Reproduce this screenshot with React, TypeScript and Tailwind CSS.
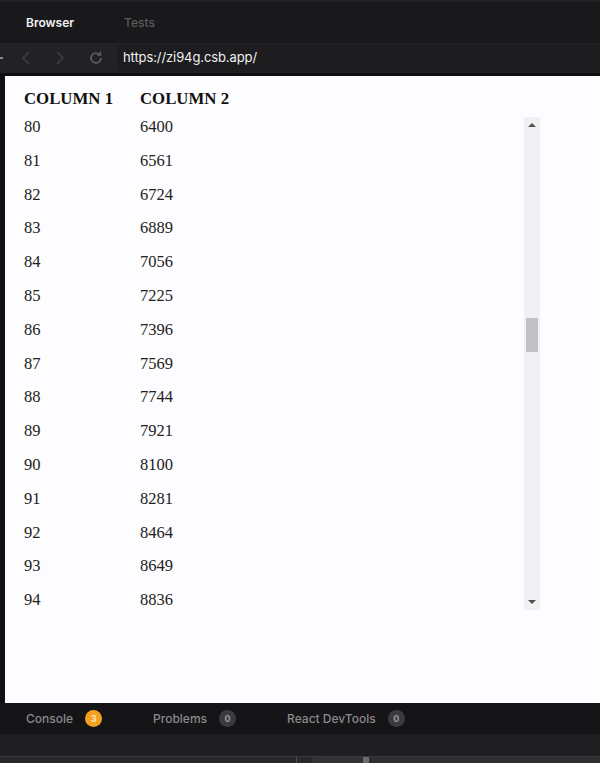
import React from "react";

const rows = Array.from({ length: 15 }, (_, i) => 80 + i);

function Badge({ n, orange }: { n: number; orange?: boolean }) {
  return (
    <span
      className={
        orange
          ? "ml-[12px] flex h-[17px] w-[17px] items-center justify-center rounded-full bg-[#f5a01f] text-[9px] font-bold text-[#fde7c4]"
          : "ml-[12px] flex h-[17px] w-[17px] items-center justify-center rounded-full bg-[#3b3a3e] text-[9px] font-bold text-[#9a999c]"
      }
    >
      {n}
    </span>
  );
}

export default function App() {
  return (
    <div className="flex h-[763px] w-[600px] flex-col overflow-hidden bg-[#151417] font-['Inter','Roboto',sans-serif]">
      {/* tab bar */}
      <div className="flex h-[43px] shrink-0 items-center border-t-[2px] border-[#232225] bg-[#19181b] text-[12px]">
        <span className="ml-[26px] font-semibold text-[#f2f2f3]">Browser</span>
        <span className="ml-[50px] font-medium text-[#5b5a5e]">Tests</span>
      </div>
      {/* address row */}
      <div className="flex h-[30px] shrink-0 items-center bg-[#222124]">
        <span className="h-[2px] w-[3px] bg-[#8a898c]" />
        <svg className="ml-[18px]" width="10" height="14" viewBox="0 0 10 14" fill="none">
          <path d="M8 1L2 7l6 6" stroke="#3f3e42" strokeWidth="1.5" />
        </svg>
        <svg className="ml-[24px]" width="10" height="14" viewBox="0 0 10 14" fill="none">
          <path d="M2 1l6 6-6 6" stroke="#3f3e42" strokeWidth="1.5" />
        </svg>
        <svg className="ml-[23px]" width="16" height="16" viewBox="0 0 16 16" fill="none">
          <path d="M13 8a5 5 0 1 1-1.5-3.6" stroke="#5d5c60" strokeWidth="1.6" />
          <path d="M12.5 1.5v3.5H9" stroke="#5d5c60" strokeWidth="1.6" />
        </svg>
        <div className="ml-[13px] flex h-[27px] flex-1 items-center rounded-l-[4px] bg-[#1d1c1f] pl-[6px] text-[13px] tracking-[-0.1px] text-[#f0f0f1]">
          https://zi94g.csb.app/
        </div>
      </div>
      <div className="h-[3px] shrink-0 bg-[#0e0d0f]" />
      {/* content */}
      <div className="flex h-[627px] shrink-0">
        <div className="w-[5px] bg-[#111012]" />
        <div className="flex flex-1 flex-col bg-[#fdfcfe] font-['Liberation_Serif','Times_New_Roman',serif] leading-[18px] text-[#111]">
          <div className="flex pl-[19px] pt-[14px] text-[16.8px] font-bold">
            <span className="w-[116px]">COLUMN 1</span>
            <span>COLUMN 2</span>
          </div>
          <div className="relative mt-[8px] h-[494px] w-[535px] overflow-hidden text-[16.5px]">
            {rows.map((r) => (
              <div key={r} className="flex h-[33.8px] pl-[19px] pt-[2px] text-[#222]">
                <span className="w-[116px]">{r}</span>
                <span>{r * r}</span>
              </div>
            ))}
            {/* scrollbar */}
            <div className="absolute right-0 top-[1px] flex h-[493px] w-[16px] flex-col items-center bg-[#f1f0f2]">
              <div className="mt-[6px] h-0 w-0 border-x-[4px] border-b-[4px] border-x-transparent border-b-[#505050]" />
              <div className="mt-[191px] h-[34px] w-[12px] bg-[#c2c1c3]" />
              <div className="mt-auto mb-[6px] h-0 w-0 border-x-[4px] border-t-[4px] border-x-transparent border-t-[#505050]" />
            </div>
          </div>
        </div>
      </div>
      {/* bottom tabs */}
      <div className="flex h-[31px] shrink-0 items-center bg-[#151417] text-[12px] font-medium text-[#8a898d]">
        <span className="ml-[26px]">Console</span>
        <Badge n={3} orange />
        <span className="ml-[51px]">Problems</span>
        <Badge n={0} />
        <span className="ml-[51px]">React DevTools</span>
        <Badge n={0} />
      </div>
      <div className="h-[22px] shrink-0 bg-[#1f1e21]" />
      <div className="flex h-[10px] shrink-0 border-t border-[#3a393c] bg-[#29282b]">
        <div className="ml-[296px] w-[1px] bg-[#4a494d]" />
        <div className="ml-[16px] w-[50px] bg-[#323134]" />
        <div className="w-[6px] bg-[#6a696c]" />
        <div className="flex-1 bg-[#2e2d30]" />
      </div>
    </div>
  );
}
